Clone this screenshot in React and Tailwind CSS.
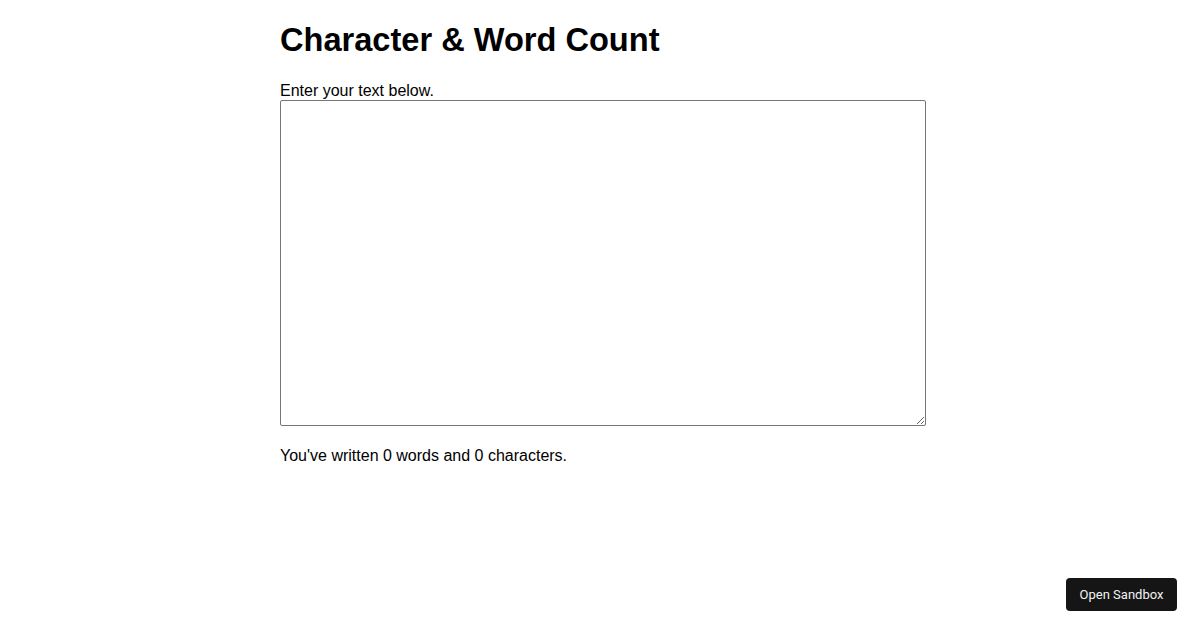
export default function App() {
  return (
    <div className="min-h-[630px] bg-white font-['Liberation_Sans',Arial,sans-serif] text-black">
      <div className="mx-auto w-[640px] pt-[21px]">
        <h1 className="text-[32.6px] font-bold leading-[37px]">
          Character &amp; Word Count
        </h1>

        <label htmlFor="text" className="mt-[24px] block text-base leading-[18px]">
          Enter your text below.
        </label>
        <textarea
          id="text"
          className="block h-[326px] w-[646px] resize-y rounded-[2px] border border-[#767676] p-[2px] text-[13px] outline-none"
        />

        <p className="mt-[21px] text-base leading-[18px]">
          You've written 0 words and 0 characters.
        </p>
      </div>

      <button className="fixed right-[23px] bottom-[19px] h-[33px] w-[111px] rounded-[4px] bg-[#151515] font-['Roboto',sans-serif] text-[13px] text-[#f2f2f2]">
        Open Sandbox
      </button>
    </div>
  );
}
